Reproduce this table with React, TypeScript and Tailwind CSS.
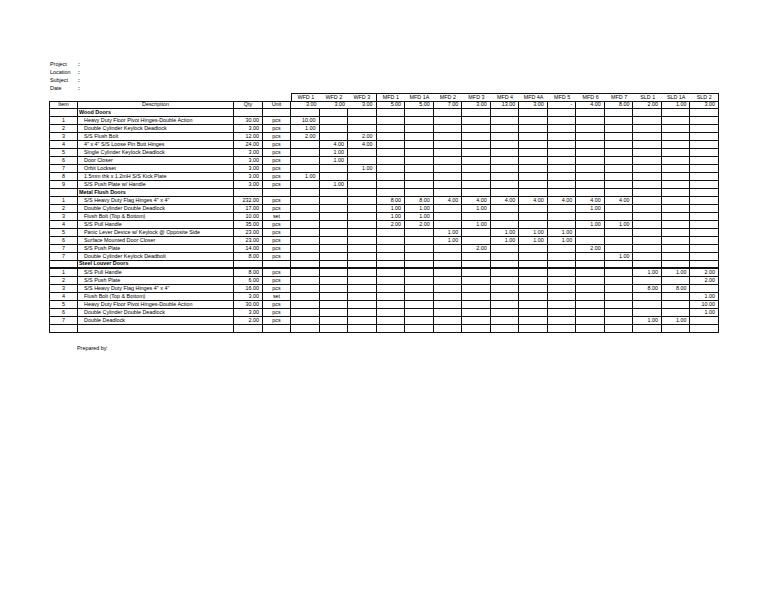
import { clsx } from "clsx";

type Row = [string, string, string, string, Record<number, string>];

const cols = ["WFD 1", "WFD 2", "WFD 3", "MFD 1", "MFD 1A", "MFD 2", "MFD 3", "MFD 4", "MFD 4A", "MFD 5", "MFD 6", "MFD 7", "SLD 1", "SLD 1A", "SLD 2"];
const totals = ["3.00", "3.00", "3.00", "5.00", "5.00", "7.00", "3.00", "13.00", "3.00", "-", "4.00", "8.00", "2.00", "1.00", "3.00"];

const sections: { title: string; rows: Row[] }[] = [
  {
    title: "Wood Doors",
    rows: [
      ["1", "Heavy Duty Floor Pivot Hinges-Double Action", "30.00", "pcs", { 0: "10.00" }],
      ["2", "Double Cylinder Keylock Deadlock", "3.00", "pcs", { 0: "1.00" }],
      ["3", "S/S Flush Bolt", "12.00", "pcs", { 0: "2.00", 2: "2.00" }],
      ["4", '4" x 4" S/S Loose Pin Butt Hinges', "24.00", "pcs", { 1: "4.00", 2: "4.00" }],
      ["5", "Single Cylinder Keylock Deadlock", "3.00", "pcs", { 1: "1.00" }],
      ["6", "Door Closer", "3.00", "pcs", { 1: "1.00" }],
      ["7", "Orbit Lockset", "3.00", "pcs", { 2: "1.00" }],
      ["8", "1.5mm thk x 1.2mH S/S Kick Plate", "3.00", "pcs", { 0: "1.00" }],
      ["9", "S/S Push Plate w/ Handle", "3.00", "pcs", { 1: "1.00" }],
    ],
  },
  {
    title: "Metal Flush Doors",
    rows: [
      ["1", 'S/S Heavy Duty Flag Hinges 4" x 4"', "232.00", "pcs", { 3: "8.00", 4: "8.00", 5: "4.00", 6: "4.00", 7: "4.00", 8: "4.00", 9: "4.00", 10: "4.00", 11: "4.00" }],
      ["2", "Double Cylinder Double Deadlock", "17.00", "pcs", { 3: "1.00", 4: "1.00", 6: "1.00", 10: "1.00" }],
      ["3", "Flush Bolt (Top & Bottom)", "10.00", "set", { 3: "1.00", 4: "1.00" }],
      ["4", "S/S Pull Handle", "35.00", "pcs", { 3: "2.00", 4: "2.00", 6: "1.00", 10: "1.00", 11: "1.00" }],
      ["5", "Panic Lever Device w/ Keylock @ Opposite Side", "23.00", "pcs", { 5: "1.00", 7: "1.00", 8: "1.00", 9: "1.00" }],
      ["6", "Surface Mounted Door Closer", "23.00", "pcs", { 5: "1.00", 7: "1.00", 8: "1.00", 9: "1.00" }],
      ["7", "S/S Push Plate", "14.00", "pcs", { 6: "2.00", 10: "2.00" }],
      ["7", "Double Cylinder Keylock Deadbolt", "8.00", "pcs", { 11: "1.00" }],
    ],
  },
  {
    title: "Steel Louver Doors",
    rows: [
      ["1", "S/S Pull Handle", "8.00", "pcs", { 12: "1.00", 13: "1.00", 14: "2.00" }],
      ["2", "S/S Push Plate", "6.00", "pcs", { 14: "2.00" }],
      ["3", 'S/S Heavy Duty Flag Hinges 4" x 4"', "16.00", "pcs", { 12: "8.00", 13: "8.00" }],
      ["4", "Flush Bolt (Top & Bottom)", "3.00", "set", { 14: "1.00" }],
      ["5", "Heavy Duty Floor Pivot Hinges-Double Action", "30.00", "pcs", { 14: "10.00" }],
      ["6", "Double Cylinder Double Deadlock", "3.00", "pcs", { 14: "1.00" }],
      ["7", "Double Deadlock", "2.00", "pcs", { 12: "1.00", 13: "1.00" }],
    ],
  },
];

const cell = "h-[8px] flex items-center overflow-hidden whitespace-nowrap border-[#111]";

// one spreadsheet row: item, description, qty, unit + 15 opening columns
const SheetRow = ({ row, bold, thick, top }: { row: Row; bold?: boolean; thick?: boolean; top?: boolean }) => {
  const [item, desc, qty, unit, vals] = row;
  const b = clsx(cell, "border-r", thick ? "border-b-2" : "border-b", top && "border-t");
  return (
    <>
      <div className={clsx(b, "border-l justify-center")}>{item}</div>
      <div className={clsx(b, bold ? "pl-[1px] font-bold" : "pl-[6px]")}>{desc}</div>
      <div className={clsx(b, "justify-end pr-[3px]")}>{qty}</div>
      <div className={clsx(b, "justify-center")}>{unit}</div>
      {cols.map((_, i) => (
        <div key={i} className={clsx(b, "justify-end pr-[3px]")}>
          {vals[i] ?? ""}
        </div>
      ))}
    </>
  );
};

export default function App() {
  return (
    <div className="min-h-[594px] w-[768px] bg-white pl-[49px] pt-[61px] font-['Liberation_Sans',Arial,sans-serif] text-[5.4px] leading-none text-black">
      {/* Header info */}
      <div className="flex flex-col">
        {["Project", "Location", "Subject", "Date"].map((l) => (
          <div key={l} className="flex h-[8px] items-center">
            <span className="w-[29px] pl-[1px]">{l}</span>
            <span className="font-bold">:</span>
          </div>
        ))}
      </div>

      <div className="grid w-[670px] grid-cols-[29px_156px_29px_28px_repeat(15,minmax(0,1fr))]">
        {/* Opening labels */}
        <div className="col-span-4 h-[8px]" />
        {cols.map((c, i) => (
          <div
            key={c}
            className={clsx(cell, "justify-center border-t", i === 0 && "border-l", i === 2 && "border-r", i === 14 && "border-r")}
          >
            {c}
          </div>
        ))}

        {/* Column heading row with opening totals */}
        <div className={clsx(cell, "justify-center border-t border-r border-b border-l")}>Item</div>
        <div className={clsx(cell, "justify-center border-t border-r border-b")}>Description</div>
        <div className={clsx(cell, "justify-center border-t border-r border-b")}>Qty</div>
        <div className={clsx(cell, "justify-center border-t border-r border-b")}>Unit</div>
        {totals.map((t, i) => (
          <div key={i} className={clsx(cell, "justify-end pr-[3px] border-t border-b", i > 1 && "border-r")}>
            {t}
          </div>
        ))}

        {sections.map((s) => (
          <div key={s.title} className="contents">
            <SheetRow row={["", s.title, "", "", {}]} bold thick={s.title === "Steel Louver Doors"} />
            {s.rows.map((r, i) => (
              <SheetRow key={i} row={r} />
            ))}
          </div>
        ))}
        <SheetRow row={["", "", "", "", {}]} />
      </div>

      <p className="mt-[11px] h-[8px] pl-[28px] leading-[8px]">Prepared by:</p>
    </div>
  );
}
